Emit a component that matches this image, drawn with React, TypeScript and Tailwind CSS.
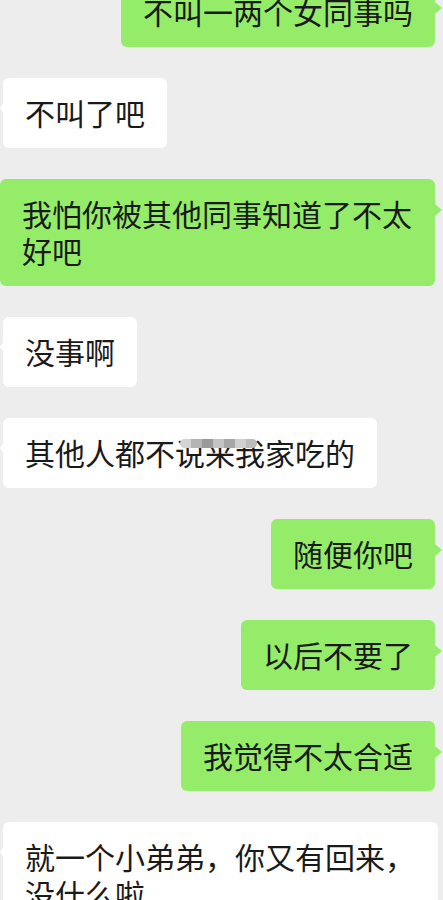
import React from "react";

type Msg = { side: "left" | "right"; text: React.ReactNode };

// 打码块
function Mosaic() {
  const cells = ["#d4d4d4", "#b4b4b4", "#9a9a9a", "#c4c4c4", "#a6a6a6", "#d0d0d0", "#bcbcbc"];
  return (
    <span className="absolute left-[155px] top-[9px] flex h-[9px] overflow-hidden rounded-full blur-[0.6px]">
      {cells.map((c, i) => (
        <span key={i} className="block h-full w-[11px]" style={{ background: c }} />
      ))}
    </span>
  );
}

const messages: Msg[] = [
  { side: "right", text: "不叫一两个女同事吗" },
  { side: "left", text: "不叫了吧" },
  { side: "right", text: "我怕你被其他同事知道了不太好吧" },
  { side: "left", text: "没事啊" },
  {
    side: "left",
    text: (
      <span className="relative">
        其他人都不说来我家吃的
        <Mosaic />
      </span>
    ),
  },
  { side: "right", text: "随便你吧" },
  { side: "right", text: "以后不要了" },
  { side: "right", text: "我觉得不太合适" },
  { side: "left", text: "就一个小弟弟，你又有回来，没什么啦" },
];

function Bubble({ msg }: { msg: Msg }) {
  const right = msg.side === "right";
  return (
    <div className={right ? "flex justify-end pr-[8px]" : "flex justify-start pl-[3px] pr-[5px]"}>
      <div
        className={
          "relative max-w-[435px] rounded-[6px] px-[22px] pt-[16px] pb-[17px] text-[30px] leading-[37px] text-[#1a1a1a] " +
          (right ? "bg-[#95ec69]" : "bg-white")
        }
      >
        {msg.text}
        {right ? (
          <span className="absolute right-[-7px] top-[25px] h-0 w-0 border-y-[6px] border-l-[7px] border-y-transparent border-l-[#95ec69]" />
        ) : (
          <span className="absolute left-[-3px] top-[24px] h-0 w-0 border-y-[6px] border-r-[4px] border-y-transparent border-r-white" />
        )}
      </div>
    </div>
  );
}

export default function App() {
  return (
    <div
      className="h-[900px] w-full overflow-hidden bg-[#ededed]"
      style={{ fontFamily: '"Noto Sans CJK SC", "Noto Sans", sans-serif' }}
    >
      <div className="-mt-[23px] flex flex-col gap-[31px]">
        {messages.map((m, i) => (
          <Bubble key={i} msg={m} />
        ))}
      </div>
    </div>
  );
}
